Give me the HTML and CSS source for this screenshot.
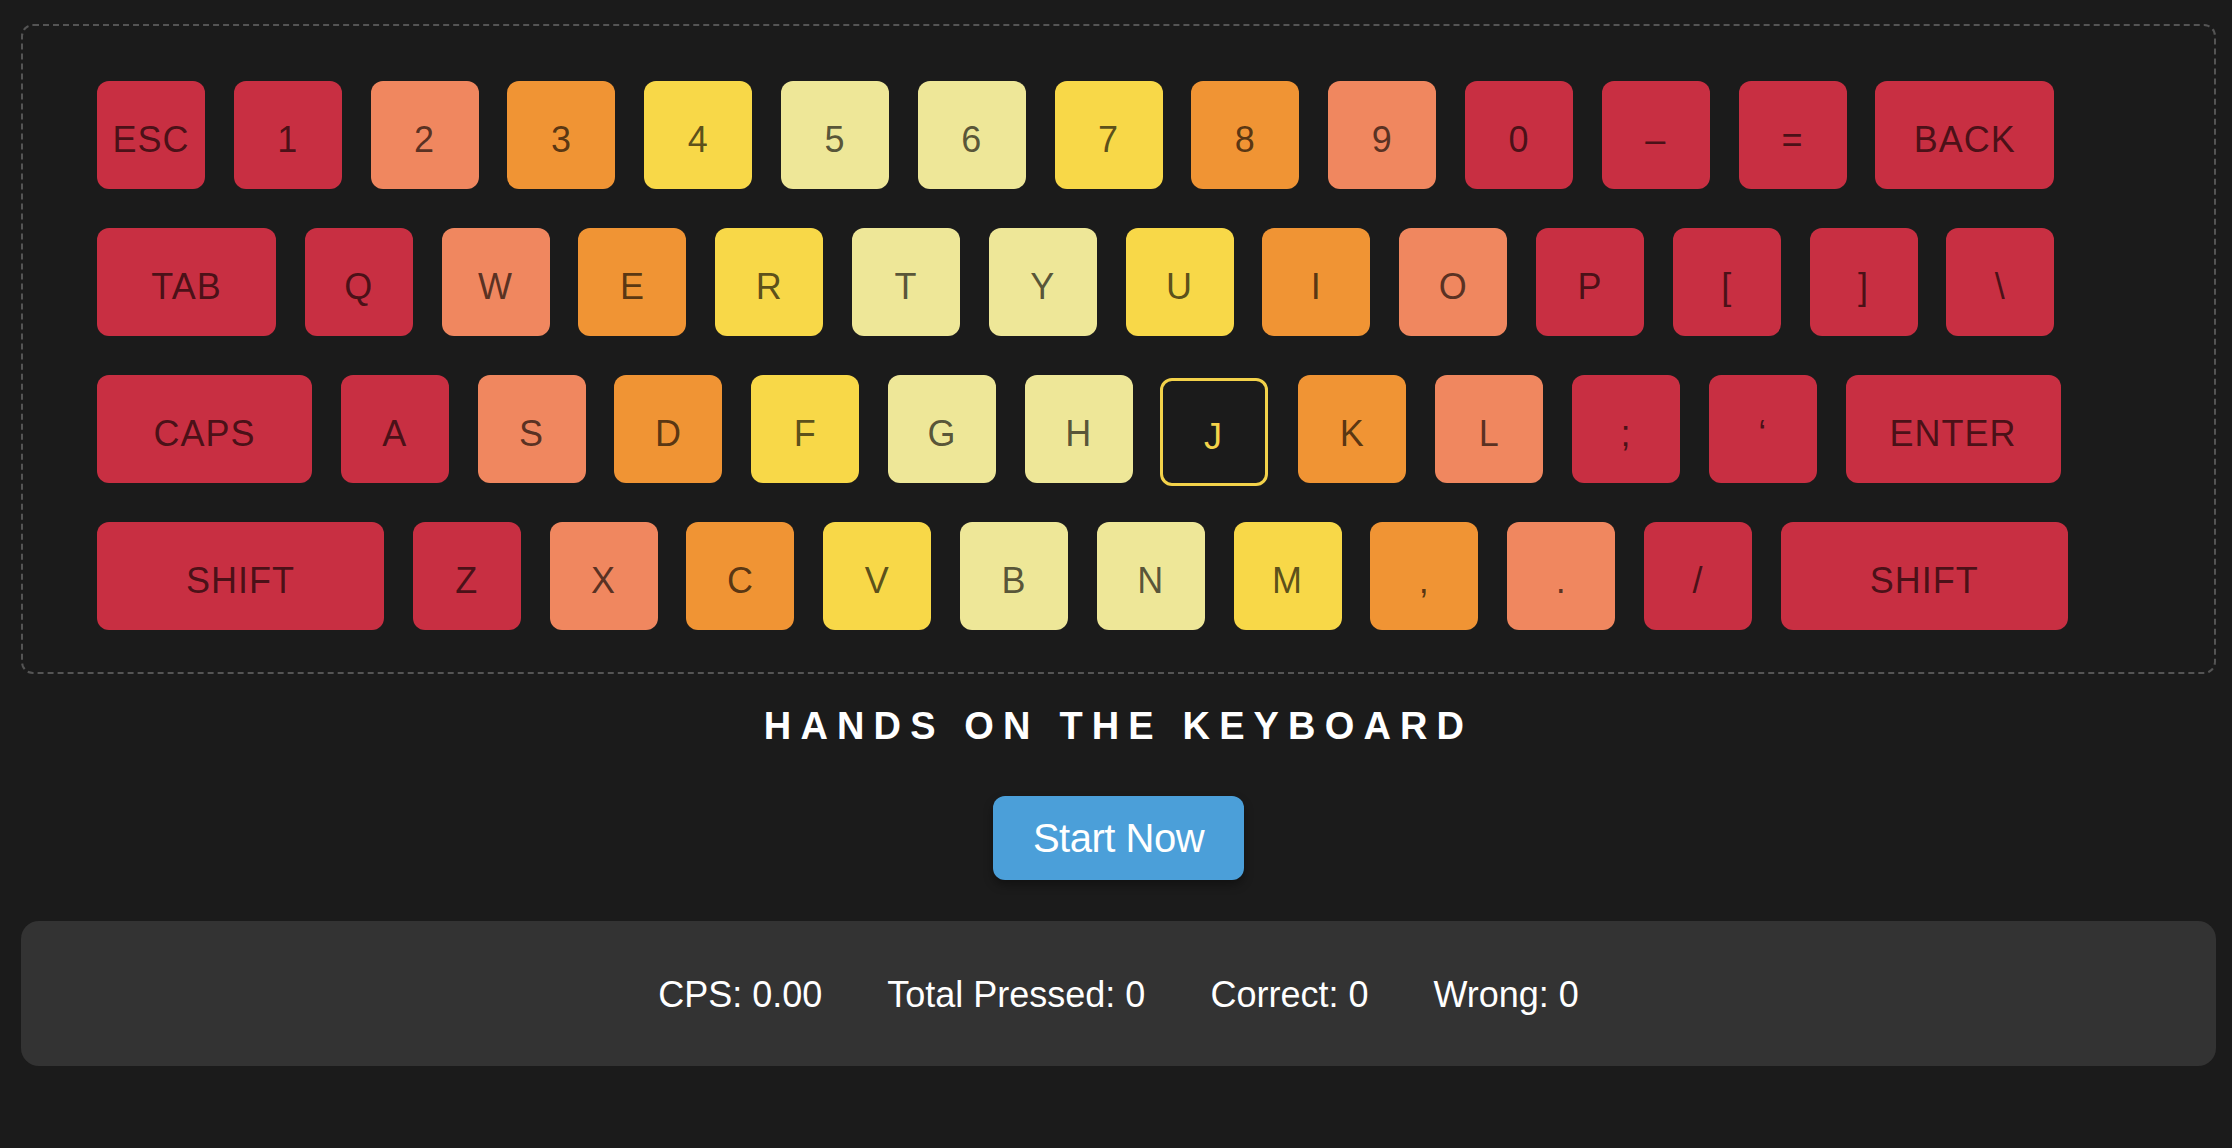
FILE: index.html
```html
<!DOCTYPE html>
<html lang="en">
<head>
<meta charset="utf-8">
<title>Hands on the Keyboard</title>
<link rel="stylesheet" href="styles.css">
</head>
<body>
<div class="app">
  <div class="keyboard">
    <div class="row">
      <div class="key r">ESC</div>
      <div class="key r">1</div>
      <div class="key s">2</div>
      <div class="key o">3</div>
      <div class="key y">4</div>
      <div class="key p">5</div>
      <div class="key p">6</div>
      <div class="key y">7</div>
      <div class="key o">8</div>
      <div class="key s">9</div>
      <div class="key r">0</div>
      <div class="key r">–</div>
      <div class="key r">=</div>
      <div class="key r w-tab">BACK</div>
    </div>
    <div class="row">
      <div class="key r w-tab">TAB</div>
      <div class="key r">Q</div>
      <div class="key s">W</div>
      <div class="key o">E</div>
      <div class="key y">R</div>
      <div class="key p">T</div>
      <div class="key p">Y</div>
      <div class="key y">U</div>
      <div class="key o">I</div>
      <div class="key s">O</div>
      <div class="key r">P</div>
      <div class="key r">[</div>
      <div class="key r">]</div>
      <div class="key r">\</div>
    </div>
    <div class="row">
      <div class="key r w-caps">CAPS</div>
      <div class="key r">A</div>
      <div class="key s">S</div>
      <div class="key o">D</div>
      <div class="key y">F</div>
      <div class="key p">G</div>
      <div class="key p">H</div>
      <div class="key active">J</div>
      <div class="key o">K</div>
      <div class="key s">L</div>
      <div class="key r">;</div>
      <div class="key r">‘</div>
      <div class="key r w-caps">ENTER</div>
    </div>
    <div class="row">
      <div class="key r w-shift">SHIFT</div>
      <div class="key r">Z</div>
      <div class="key s">X</div>
      <div class="key o">C</div>
      <div class="key y">V</div>
      <div class="key p">B</div>
      <div class="key p">N</div>
      <div class="key y">M</div>
      <div class="key o">,</div>
      <div class="key s">.</div>
      <div class="key r">/</div>
      <div class="key r w-shift">SHIFT</div>
    </div>
  </div>

  <h1 class="title">HANDS ON THE KEYBOARD</h1>

  <div class="actions">
    <button class="start-btn" type="button">Start Now</button>
  </div>

  <div class="stats">
    <span class="stat">CPS: 0.00</span>
    <span class="stat">Total Pressed: 0</span>
    <span class="stat">Correct: 0</span>
    <span class="stat">Wrong: 0</span>
  </div>
</div>
</body>
</html>
```

FILE: styles.css
```css
* {
  box-sizing: border-box;
}

html, body {
  margin: 0;
  padding: 0;
  background: #1b1b1b;
}

body {
  font-family: "Liberation Sans", Arial, Helvetica, sans-serif;
  color: #ffffff;
  height: 1148px;
  overflow: hidden;
}

.app {
  width: 2195px;
  margin-left: 21px;
  padding-top: 24px;
}

.keyboard {
  border: 2px dashed #545454;
  border-radius: 12px;
  padding: 55px 74px 42px 74px;
  display: flex;
  flex-direction: column;
  gap: 39px;
}

.row {
  display: flex;
  gap: 28.8px;
}

.key {
  width: 108px;
  height: 108px;
  flex: 0 0 auto;
  border-radius: 12px;
  display: flex;
  align-items: center;
  justify-content: center;
  padding-top: 9px;
  font-size: 36px;
  letter-spacing: 1px;
  color: rgba(0, 0, 0, 0.65);
}

.w-tab { width: 179px; }
.w-caps { width: 215px; }
.w-shift { width: 287px; }

.r { background: #c82f42; }
.s { background: #f0875f; }
.o { background: #f09434; }
.y { background: #f8d848; }
.p { background: #eee798; }

.key.active {
  background: transparent;
  border: 3px solid #f3d24a;
  color: #f3d24a;
  transform: translate(-2px, 3px);
}

.title {
  margin: 33px 0 0 0;
  text-align: center;
  font-size: 38px;
  line-height: 38px;
  font-weight: 700;
  letter-spacing: 9.15px;
  color: #ffffff;
}

.actions {
  display: flex;
  justify-content: center;
  margin-top: 51px;
}

.start-btn {
  height: 84px;
  padding: 0 40px;
  border: none;
  border-radius: 12px;
  background: #4b9fd9;
  color: #ffffff;
  font-family: "Liberation Sans", Arial, Helvetica, sans-serif;
  font-size: 40px;
  letter-spacing: -0.5px;
  box-shadow: 0 5px 10px rgba(0, 0, 0, 0.35);
  cursor: pointer;
}

.stats {
  margin-top: 41px;
  height: 145px;
  background: #333333;
  border-radius: 18px;
  display: flex;
  align-items: center;
  justify-content: center;
  gap: 65px;
  padding-top: 2px;
  font-size: 36px;
  color: #ffffff;
}
```
